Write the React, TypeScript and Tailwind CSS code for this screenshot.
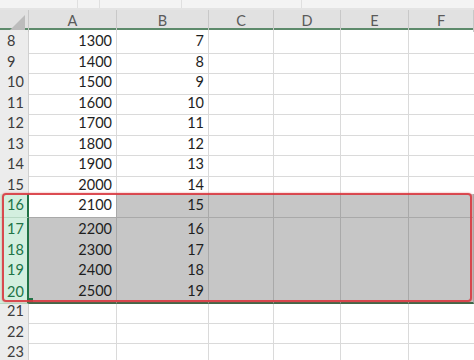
import React from "react";

const cols = "grid grid-cols-[29px_88px_92px_65px_67px_68px_1fr]";

type RowData = { n: number; a?: number; b?: number };

const topRows: RowData[] = [
  { n: 8, a: 1300, b: 7 },
  { n: 9, a: 1400, b: 8 },
  { n: 10, a: 1500, b: 9 },
  { n: 11, a: 1600, b: 10 },
  { n: 12, a: 1700, b: 11 },
  { n: 13, a: 1800, b: 12 },
  { n: 14, a: 1900, b: 13 },
  { n: 15, a: 2000, b: 14 },
];

const selRows: RowData[] = [
  { n: 16, a: 2100, b: 15 },
  { n: 17, a: 2200, b: 16 },
  { n: 18, a: 2300, b: 17 },
  { n: 19, a: 2400, b: 18 },
  { n: 20, a: 2500, b: 19 },
];

const bottomRows: RowData[] = [{ n: 21 }, { n: 22 }, { n: 23 }];

const PlainRow = ({ r }: { r: RowData }) => (
  <div className={`${cols} h-[20.5px]`}>
    <div className="flex items-end pl-[7px] pb-[1px] bg-[#ececec] text-[#3c3c3c] border-r border-b border-[#d0d0d0]">
      {r.n}
    </div>
    <div className="flex items-end justify-end pr-[4px] pb-[1px] border-r border-b border-[#dadada]">
      {r.a}
    </div>
    <div className="flex items-end justify-end pr-[4px] pb-[1px] border-r border-b border-[#dadada]">
      {r.b}
    </div>
    <div className="border-r border-b border-[#dadada]" />
    <div className="border-r border-b border-[#dadada]" />
    <div className="border-r border-b border-[#dadada]" />
    <div className="border-b border-[#dadada]" />
  </div>
);

const SelRow = ({ r, active, last }: { r: RowData; active?: boolean; last?: boolean }) => {
  const cell = last
    ? "bg-[#c6c6c6] border-r border-[#a9a9a9] border-b-2 border-b-[#3d6b4b]"
    : "bg-[#c6c6c6] border-r border-b border-[#a9a9a9]";
  return (
    <div className={`${cols} ${active ? "h-[24px]" : "h-[20.5px]"}`}>
      <div className="flex items-end pl-[7px] pb-[1px] bg-[#d3efdf] text-[#217346] border-r-2 border-r-[#217346] border-b border-b-[#b7d9c4]">
        {r.n}
      </div>
      <div
        className={`flex items-end justify-end pr-[4px] pb-[1px] ${
          active ? "bg-white border-r border-b border-[#a9a9a9]" : cell
        }`}
      >
        {r.a}
      </div>
      <div className={`flex items-end justify-end pr-[4px] pb-[1px] ${cell}`}>{r.b}</div>
      <div className={cell} />
      <div className={cell} />
      <div className={cell} />
      <div className={cell} />
    </div>
  );
};

export default function App() {
  return (
    <div className="w-[474px] h-[360px] overflow-hidden bg-white font-['Lato',Arial,sans-serif] text-[14.5px] text-[#1e1e1e] relative">
      {/* ribbon remnant */}
      <div className="h-[10px] flex bg-[#f4f4f4] border-b-2 border-[#e4e4e4]">
        <div className="w-[78px] border-r border-[#e0e0e0]" />
        <div className="w-[22px] border-r border-[#e0e0e0]" />
        <div className="w-[82px] border-r border-[#e0e0e0]" />
        <div className="w-[120px] border-r border-[#e0e0e0]" />
        <div className="flex-1" />
      </div>

      {/* column headers */}
      <div className={`${cols} h-[20px] bg-[#e1e1e1] text-[#5a5a5a] border-b-2 border-[#5d8a6b]`}>
        <div className="relative border-r border-[#c8c8c8]">
          <svg className="absolute right-[3px] bottom-[2px]" width="15" height="15" viewBox="0 0 15 15">
            <polygon points="15,0 15,15 0,15" fill="#bcbcbc" />
          </svg>
        </div>
        {["A", "B", "C", "D", "E", "F"].map((c) => (
          <div key={c} className="flex items-center justify-center border-r border-[#c8c8c8]">
            {c}
          </div>
        ))}
      </div>

      {topRows.map((r) => (
        <PlainRow key={r.n} r={r} />
      ))}

      <div className="relative">
        {selRows.map((r, i) => (
          <SelRow key={r.n} r={r} active={i === 0} last={i === selRows.length - 1} />
        ))}
        <div className="absolute left-[29px] bottom-[-2px] w-[4px] h-[4px] bg-[#217346]" />
      </div>

      {bottomRows.map((r) => (
        <PlainRow key={r.n} r={r} />
      ))}

      {/* red highlight box */}
      <div className="absolute top-[193px] left-[2px] right-[2px] h-[109px] rounded-[4px] border-2 border-[#d8373f]/90 shadow-[0_0_2px_rgba(220,60,60,0.6)] pointer-events-none" />
    </div>
  );
}
